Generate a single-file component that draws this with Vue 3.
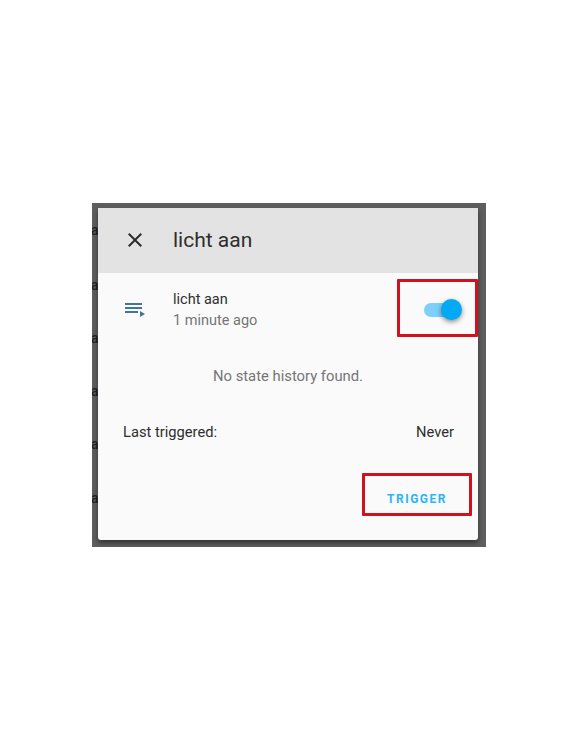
<script setup>
const fragments = [
  { id: 1, top: 222 - 203 },
  { id: 2, top: 277 - 203 },
  { id: 3, top: 330 - 203 },
  { id: 4, top: 383 - 203 },
  { id: 5, top: 436 - 203 },
  { id: 6, top: 490 - 203 },
]
</script>

<template>
  <div class="page">
    <div class="backdrop">
      <span
        v-for="f in fragments"
        :key="f.id"
        class="fragment"
        :style="{ top: f.top + 'px' }"
      >a</span>
      <div class="dialog">
        <header class="head">
          <svg class="close" viewBox="0 0 24 24" width="24" height="24">
            <path d="M19 6.41 17.59 5 12 10.59 6.41 5 5 6.41 10.59 12 5 17.59 6.41 19 12 13.41 17.59 19 19 17.59 13.41 12z" fill="#2b2b2b" />
          </svg>
          <h1 class="title">licht aan</h1>
        </header>

        <section class="state-row">
          <svg class="state-icon" viewBox="0 0 24 24" width="24" height="24">
            <path d="M19 9H2v2h17V9m0-4H2v2h17V5M2 15h13v-2H2v2m15-2v6l5-3-5-3z" fill="#44739e" />
          </svg>
          <div class="state-text">
            <div class="name">licht aan</div>
            <div class="time">1 minute ago</div>
          </div>
          <div class="switch">
            <span class="track"></span>
            <span class="thumb"></span>
            <span class="mark-switch"></span>
          </div>
        </section>

        <p class="empty">No state history found.</p>

        <div class="attr">
          <span>Last triggered:</span>
          <span>Never</span>
        </div>

        <footer class="actions">
          <button class="trigger" type="button">TRIGGER</button>
        </footer>
      </div>
    </div>
  </div>
</template>

<style>
html, body { background: #fff; }
</style>

<style scoped>
.page {
  width: 579px;
  height: 750px;
  box-sizing: border-box;
  padding: 203px 0 0 92px;
  background: #fff;
  overflow: hidden;
  font-family: Roboto, "Liberation Sans", sans-serif;
}
.backdrop {
  position: relative;
  width: 394px;
  height: 344px;
  box-sizing: border-box;
  padding: 5px 8px 7px 6px;
  background: #5e5e5e;
  overflow: hidden;
}
.fragment {
  position: absolute;
  left: -1px;
  font-size: 14px;
  line-height: 16px;
  font-weight: 500;
  color: #222;
}
.dialog {
  position: relative;
  height: 100%;
  display: flex;
  flex-direction: column;
  background: #fafafa;
  border-radius: 0 0 3px 3px;
  box-shadow: 0 3px 5px rgba(0, 0, 0, 0.45);
}
.head {
  flex: none;
  height: 65px;
  display: flex;
  align-items: center;
  padding-left: 25px;
  background: #e3e3e3;
}
.close { flex: none; margin-top: -1px; }
.title {
  margin: -2px 0 0 26px;
  font-size: 21px;
  font-weight: 400;
  color: #2e2e2e;
}
.state-row {
  flex: none;
  position: relative;
  display: flex;
  align-items: center;
  height: 72px;
  padding-left: 25px;
}
.state-icon { flex: none; margin-top: 2px; }
.state-text { margin: 4px 0 0 26px; }
.name {
  font-size: 14.5px;
  line-height: 20px;
  color: #2e2e2e;
}
.time {
  font-size: 14.5px;
  line-height: 22px;
  color: #757575;
}
.switch {
  position: absolute;
  left: 326px;
  top: 25px;
  width: 38px;
  height: 24px;
}
.track {
  position: absolute;
  left: 0;
  top: 5px;
  width: 32px;
  height: 14px;
  border-radius: 7px;
  background: #7cd0fa;
}
.thumb {
  position: absolute;
  left: 17px;
  top: 1px;
  width: 21px;
  height: 21px;
  border-radius: 50%;
  background: #03a9f4;
  box-shadow: 0 2px 5px rgba(0, 0, 0, 0.45);
}
.mark-switch {
  position: absolute;
  left: -27px;
  top: -19px;
  width: 81px;
  height: 58px;
  box-sizing: border-box;
  border: 3px solid #d0121f;
  border-radius: 1px;
}
.empty {
  flex: none;
  margin: 21px 0 0;
  font-size: 14.8px;
  line-height: 20px;
  text-align: center;
  color: #757575;
}
.attr {
  flex: none;
  display: flex;
  justify-content: space-between;
  margin-top: 36px;
  padding: 0 24px 0 25px;
  font-size: 14.7px;
  line-height: 20px;
  color: #2e2e2e;
}
.actions {
  flex: none;
  display: flex;
  justify-content: flex-end;
  margin-top: 31px;
  padding-right: 6px;
}
.trigger {
  width: 110px;
  height: 43px;
  box-sizing: border-box;
  padding: 8px 0 0;
  border: 3px solid #d0121f;
  border-radius: 1px;
  background: transparent;
  font-family: inherit;
  font-size: 12px;
  font-weight: 700;
  letter-spacing: 1.5px;
  color: #29b6f6;
}
</style>
